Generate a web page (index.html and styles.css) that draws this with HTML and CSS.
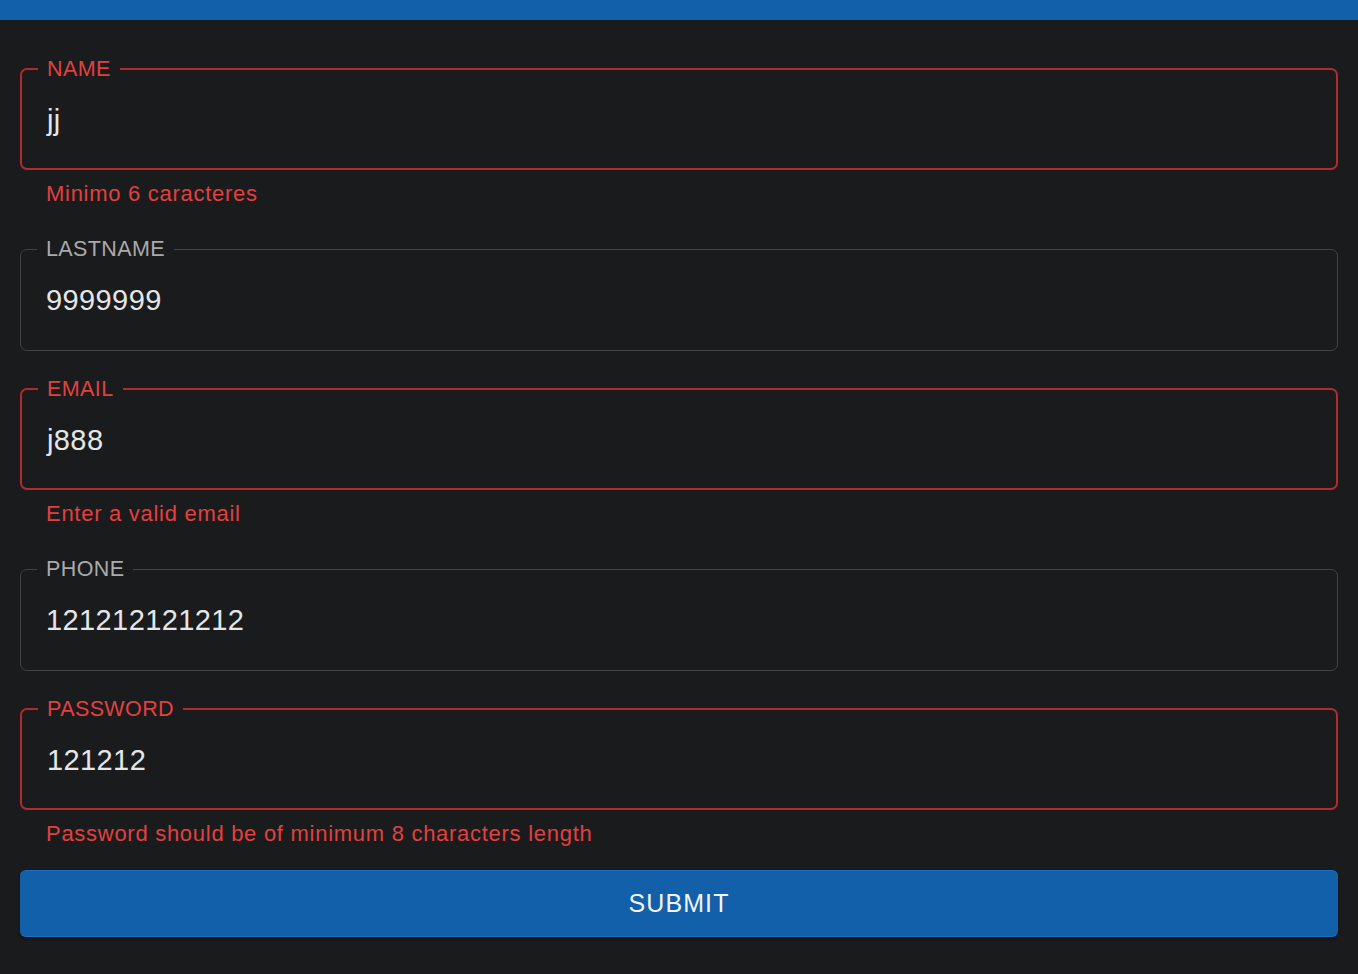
FILE: index.html
```html
<!DOCTYPE html>
<html lang="en">
<head>
<meta charset="utf-8">
<title>Form</title>
<link rel="stylesheet" href="styles.css">
</head>
<body>
<div class="topbar"></div>
<form class="form">
  <div class="field error">
    <fieldset class="box">
      <legend class="label">NAME</legend>
      <div class="value">jj</div>
    </fieldset>
    <div class="helper">Minimo 6 caracteres</div>
  </div>
  <div class="field">
    <fieldset class="box">
      <legend class="label">LASTNAME</legend>
      <div class="value">9999999</div>
    </fieldset>
  </div>
  <div class="field error">
    <fieldset class="box">
      <legend class="label">EMAIL</legend>
      <div class="value">j888</div>
    </fieldset>
    <div class="helper">Enter a valid email</div>
  </div>
  <div class="field">
    <fieldset class="box">
      <legend class="label">PHONE</legend>
      <div class="value">121212121212</div>
    </fieldset>
  </div>
  <div class="field error">
    <fieldset class="box">
      <legend class="label">PASSWORD</legend>
      <div class="value">121212</div>
    </fieldset>
    <div class="helper">Password should be of minimum 8 characters length</div>
  </div>
  <button type="button" class="submit">SUBMIT</button>
</form>
</body>
</html>
```
FILE: styles.css
```css
html, body {
  margin: 0;
  padding: 0;
  background: #1a1b1d;
  height: 100%;
  font-family: "Liberation Sans", Arial, Helvetica, sans-serif;
}
.topbar {
  height: 20px;
  background: #125faa;
}
.form {
  display: flex;
  flex-direction: column;
  gap: 27px;
  padding: 38px 20px 0 20px;
}
.field {
  display: flex;
  flex-direction: column;
}
.box {
  margin: 0;
  padding: 0 25px 33px 25px;
  border: 1.5px solid #424345;
  border-radius: 7px;
  min-width: 0;
}
.label {
  padding: 0 9px;
  margin-left: -9px;
  font-size: 21.5px;
  line-height: 22px;
  color: #a9aaab;
  letter-spacing: 0.4px;
}
.value {
  margin-top: 23px;
  height: 34px;
  line-height: 34px;
  font-size: 29px;
  color: #e6e6e6;
  letter-spacing: 0.4px;
}
.field.error .box {
  border: 2px solid #b42a2a;
  padding-bottom: 31px;
}
.field.error .label {
  color: #e2403f;
}
.helper {
  margin-top: 6px;
  padding-left: 26px;
  font-size: 22px;
  line-height: 35px;
  color: #e2403f;
  letter-spacing: 0.72px;
}
.submit {
  margin-top: -8px;
  height: 67px;
  border: none;
  border-top: 1px solid #1b6fc2;
  border-bottom: 1px solid #1b6fc2;
  border-radius: 6px;
  background: #125faa;
  color: #f2f4f8;
  font-family: "Liberation Sans", Arial, Helvetica, sans-serif;
  font-size: 25px;
  letter-spacing: 1.1px;
  box-shadow: 0 2px 3px rgba(0,0,0,0.4);
  cursor: pointer;
}
```
